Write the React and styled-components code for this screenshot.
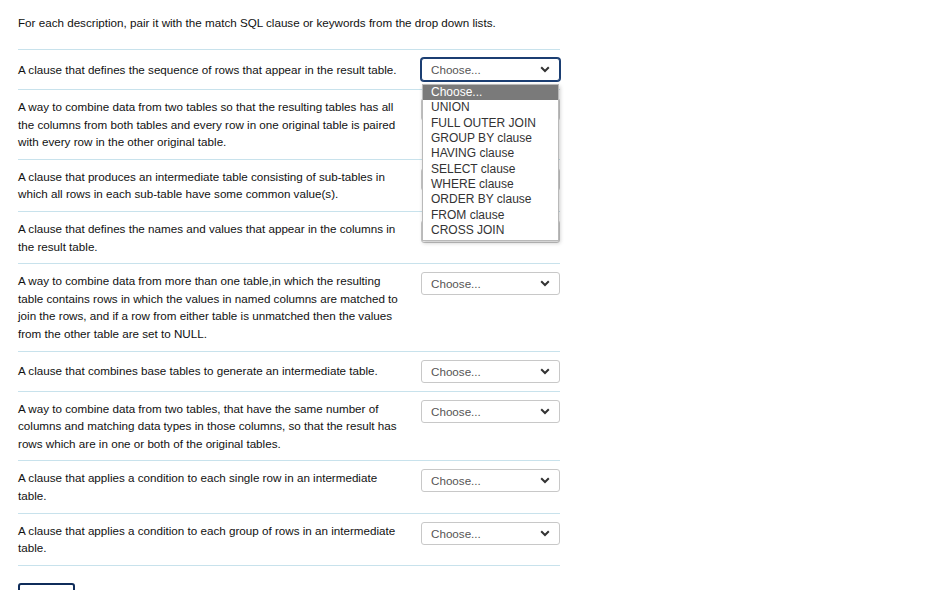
import styled, { createGlobalStyle } from "styled-components";

const GlobalStyle = createGlobalStyle`
  html, body {
    margin: 0;
    padding: 0;
    background: #fff;
    overflow: hidden;
  }
  body {
    font-family: "Liberation Sans", Arial, sans-serif;
    font-size: 11.65px;
    color: #111;
  }
`;

const OPTIONS = [
  "Choose...",
  "UNION",
  "FULL OUTER JOIN",
  "GROUP BY clause",
  "HAVING clause",
  "SELECT clause",
  "WHERE clause",
  "ORDER BY clause",
  "FROM clause",
  "CROSS JOIN",
];

const ITEMS = [
  "A clause that defines the sequence of rows that appear in the result table.",
  "A way to combine data from two tables so that the resulting tables has all the columns from both tables and every row in one original table is paired with every row in the other original table.",
  "A clause that produces an intermediate table consisting of sub-tables in which all rows in each sub-table have some common value(s).",
  "A clause that defines the names and values that appear in the columns in the result table.",
  "A way to combine data from more than one table,in which the resulting table contains rows in which the values in named columns are matched to join the rows, and if a row from either table is unmatched then the values from the other table are set to NULL.",
  "A clause that combines base tables to generate an intermediate table.",
  "A way to combine data from two tables, that have the same number of columns and matching data types in those columns, so that the result has rows which are in one or both of the original tables.",
  "A clause that applies a condition to each single row in an intermediate table.",
  "A clause that applies a condition to each group of rows in an intermediate table.",
];

const Page = styled.div`
  padding: 14px 18px 0;
  width: 542px;
`;

const Intro = styled.p`
  margin: 0 0 18px;
  line-height: 17px;
`;

const Table = styled.div`
  border-top: 1px solid #c8e2ec;
`;

const Row = styled.div`
  display: grid;
  grid-template-columns: 388px 1fr;
  column-gap: 15px;
  align-items: start;
  padding: 8px 0;
  border-bottom: 1px solid #c8e2ec;
`;

const Text = styled.div`
  line-height: 17.6px;
  min-height: 23px;
  display: flex;
  align-items: ${(p) => (p.$single ? "center" : "flex-start")};
`;

const SelectWrap = styled.div`
  position: relative;
  width: 139px;
`;

const Select = styled.div`
  box-sizing: border-box;
  height: 23px;
  display: flex;
  align-items: center;
  justify-content: space-between;
  padding: 0 9px 0 9px;
  border: 1px solid ${(p) => (p.$focused ? "#1b3e72" : "#c8c8c8")};
  box-shadow: ${(p) => (p.$focused ? "0 0 0 1px #1b3e72" : "none")};
  border-radius: 3px;
  background: #fff;
  color: #555;
`;

const Chevron = () => (
  <svg width="10" height="7" viewBox="0 0 10 7">
    <path d="M1.2 1.3 L5 5 L8.8 1.3" fill="none" stroke="#333" strokeWidth="2" />
  </svg>
);

const Menu = styled.ul`
  position: absolute;
  top: 26px;
  left: 1px;
  width: 137px;
  margin: 0;
  padding: 0 0 2px;
  list-style: none;
  background: #fff;
  border: 1px solid #b9b9b9;
  box-shadow: 1px 2px 4px rgba(0, 0, 0, 0.22);
  z-index: 5;
  box-sizing: border-box;
`;

const Option = styled.li`
  padding: 0 0 0 8px;
  height: 15.35px;
  line-height: 15.35px;
  font-size: 12px;
  color: ${(p) => (p.$active ? "#fff" : "#333")};
  background: ${(p) => (p.$active ? "#7a7a7a" : "transparent")};
  white-space: nowrap;
`;

const Submit = styled.button`
  margin-top: 17px;
  width: 57px;
  height: 30px;
  border: 2px solid #0f2c5a;
  border-radius: 3px;
  background: #fff;
`;

const Dropdown = ({ open }) => (
  <SelectWrap>
    <Select $focused={open}>
      <span>Choose...</span>
      <Chevron />
    </Select>
    {open && (
      <Menu>
        {OPTIONS.map((o, i) => (
          <Option key={o} $active={i === 0}>
            {o}
          </Option>
        ))}
      </Menu>
    )}
  </SelectWrap>
);

export default function App() {
  return (
    <Page>
      <GlobalStyle />
      <Intro>
        For each description, pair it with the match SQL clause or keywords from the drop down lists.
      </Intro>
      <Table>
        {ITEMS.map((t, i) => (
          <Row key={i}>
            <Text $single={i === 0 || i === 5}>{t}</Text>
            <Dropdown open={i === 0} />
          </Row>
        ))}
      </Table>
      <Submit />
    </Page>
  );
}
